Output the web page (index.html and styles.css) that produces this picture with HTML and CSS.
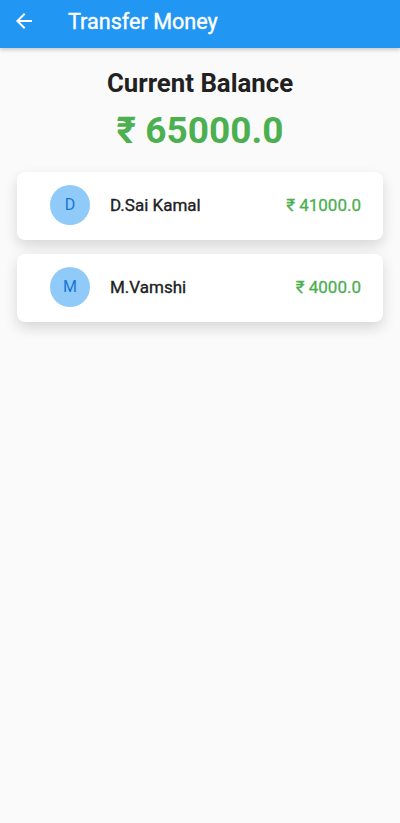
FILE: index.html
```html
<!DOCTYPE html>
<html lang="en">

<head>
    <meta charset="UTF-8">
    <meta name="viewport" content="width=device-width, initial-scale=1.0">
    <title>Transfer Money</title>
    <link rel="stylesheet" href="styles.css">
</head>

<body>
    <header class="appbar">
        <svg class="back" width="24" height="24" viewBox="0 0 24 24">
            <path d="M20 11H7.83l5.59-5.59L12 4l-8 8 8 8 1.41-1.41L7.83 13H20v-2z" fill="#fff"/>
        </svg>
        <h1 class="title">Transfer Money</h1>
    </header>

    <section class="balance">
        <h2 class="balance-label">Current Balance</h2>
        <div class="balance-amount">₹ 65000.0</div>
    </section>

    <ul class="users">
        <li class="user-card">
            <span class="avatar">D</span>
            <span class="user-name">D.Sai Kamal</span>
            <span class="user-amount">₹ 41000.0</span>
        </li>
        <li class="user-card">
            <span class="avatar">M</span>
            <span class="user-name">M.Vamshi</span>
            <span class="user-amount">₹ 4000.0</span>
        </li>
    </ul>
</body>

</html>
```

FILE: styles.css
```css
body {
    margin: 0;
    padding: 0;
    font-family: Roboto, "Noto Sans", sans-serif;
    background-color: #fafafa;
    min-height: 823px;
}

.appbar {
    height: 48px;
    box-sizing: border-box;
    padding-bottom: 6px;
    background-color: #2196f3;
    display: flex;
    align-items: center;
    box-shadow: 0 2px 4px rgba(0, 0, 0, 0.2);
}

.back {
    margin-left: 12px;
}

.title {
    margin: 0 0 0 32px;
    color: white;
    font-size: 21.6px;
    font-weight: 400;
    -webkit-text-stroke: 0.4px white;
}

.balance {
    text-align: center;
    padding-top: 20px;
}

.balance-label {
    margin: 0;
    font-size: 25.8px;
    font-weight: 700;
    color: #212121;
    line-height: 30px;
}

.balance-amount {
    margin-top: 12px;
    font-size: 37px;
    font-weight: 700;
    color: #4caf50;
    line-height: 42px;
}

.users {
    list-style: none;
    margin: 20px 0 0;
    padding: 0 17px;
    display: flex;
    flex-direction: column;
    gap: 14px;
}

.user-card {
    height: 68px;
    box-sizing: border-box;
    background-color: white;
    border-radius: 8px;
    display: flex;
    align-items: center;
    padding: 0 22px 3px 33px;
    box-shadow: 0 6px 14px rgba(0, 0, 0, 0.14);
}

.avatar {
    width: 40px;
    height: 40px;
    border-radius: 50%;
    background-color: #90caf9;
    color: #1976d2;
    font-size: 16px;
    display: flex;
    align-items: center;
    justify-content: center;
}

.user-name {
    flex: 1;
    margin-left: 20px;
    font-size: 17px;
    font-weight: 400;
    color: #212121;
    -webkit-text-stroke: 0.35px #212121;
}

.user-amount {
    font-size: 17px;
    font-weight: 400;
    color: #4caf50;
    -webkit-text-stroke: 0.3px #4caf50;
}
```
